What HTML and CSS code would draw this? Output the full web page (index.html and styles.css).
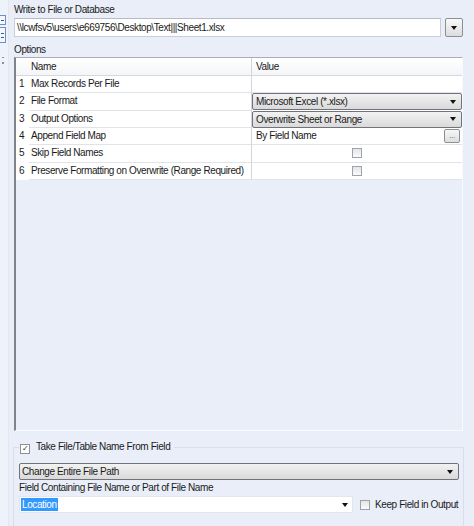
FILE: index.html
```html
<!DOCTYPE html>
<html lang="en">
<head>
  <meta charset="utf-8">
  <title>Output Data</title>
  <link rel="stylesheet" href="styles.css">
</head>
<body>
<div class="frame">
  <div class="strip">
    <div class="tab tab-one"><span class="dash"></span></div>
    <div class="tab tab-two"><span class="dash"></span><span class="dash"></span></div>
    <div class="dot dot-one"></div>
    <div class="dot dot-two"></div>
  </div>

  <div class="main">
    <div class="label first">Write to File or Database</div>
    <div class="path-row">
      <div class="path-box">\\lcwfsv5\users\e669756\Desktop\Text|||Sheet1.xlsx</div>
      <div class="drop-btn"><span class="arrow"></span></div>
    </div>

    <div class="label options">Options</div>
    <div class="grid">
      <div class="grow head">
        <div class="num"></div>
        <div class="name">Name</div>
        <div class="value">Value</div>
      </div>
      <div class="grow">
        <div class="num">1</div>
        <div class="name">Max Records Per File</div>
        <div class="value"></div>
      </div>
      <div class="grow">
        <div class="num">2</div>
        <div class="name">File Format</div>
        <div class="value"><div class="combo">Microsoft Excel (*.xlsx)<span class="arrow"></span></div></div>
      </div>
      <div class="grow">
        <div class="num">3</div>
        <div class="name">Output Options</div>
        <div class="value"><div class="combo">Overwrite Sheet or Range<span class="arrow"></span></div></div>
      </div>
      <div class="grow">
        <div class="num">4</div>
        <div class="name">Append Field Map</div>
        <div class="value text">By Field Name<span class="dots-btn">...</span></div>
      </div>
      <div class="grow">
        <div class="num">5</div>
        <div class="name">Skip Field Names</div>
        <div class="value center"><span class="check"></span></div>
      </div>
      <div class="grow">
        <div class="num">6</div>
        <div class="name">Preserve Formatting on Overwrite (Range Required)</div>
        <div class="value center"><span class="check"></span></div>
      </div>
    </div>

    <fieldset class="group">
      <legend><span class="check ticked">&#10003;</span>Take File/Table Name From Field</legend>
      <div class="combo wide">Change Entire File Path<span class="arrow"></span></div>
      <div class="label field">Field Containing File Name or Part of File Name</div>
      <div class="field-row">
        <div class="field-box"><span class="selected">Location</span><span class="arrow"></span></div>
        <span class="check"></span>
        <span class="keep">Keep Field in Output</span>
      </div>
    </fieldset>
  </div>
</div>
</body>
</html>
```

FILE: styles.css
```css
html, body { margin: 0; padding: 0; }
body { background: #e9eef8; font-family: "Liberation Sans", Arial, sans-serif; font-size: 10px; letter-spacing: -0.4px; color: #1a1a1a; width: 474px; height: 526px; overflow: hidden; }

.frame { display: flex; height: 526px; }

/* left strip with cut off buttons */
.strip { width: 9px; background: #eef2fa; border-right: 1px solid #e2e7f1; padding-top: 15px; box-sizing: border-box; }
.tab { width: 6px; border: 1px solid #6d8fc8; border-left: none; background: #f4f7fd; box-sizing: border-box; display: flex; flex-direction: column; justify-content: center; gap: 3px; }
.tab-one { height: 10px; }
.tab-two { height: 16px; margin-top: 2px; }
.dash { display: block; width: 3px; height: 1px; background: #3b5b95; margin-left: 1px; }
.dot { width: 2px; height: 1px; background: #8a8f99; margin-left: 2px; }
.dot-one { margin-top: 14px; }
.dot-two { margin-top: 4px; height: 2px; }

.main { flex: 1; padding: 0 11px 0 5px; }

.label { line-height: 14px; }
.label.first { padding-top: 3px; height: 15px; }
.label.options { padding-top: 6px; height: 14px; }

.path-row { display: flex; gap: 4px; height: 19px; }
.path-box { flex: 1; background: #fff; border: 1px solid #c9ced8; border-top-color: #b5bac4; line-height: 17px; padding-left: 2px; }
.drop-btn { width: 16px; height: 17px; border: 1px solid #8b8f96; border-radius: 2px; background: linear-gradient(#fafafa, #dcdcdc); display: flex; align-items: center; justify-content: center; }

.arrow { display: inline-block; width: 0; height: 0; border-left: 3.5px solid transparent; border-right: 3.5px solid transparent; border-top: 4px solid #111; }

/* options grid */
.grid { height: 374px; border-left: 2px solid #7f838b; border-top: 1px solid #a9adb5; border-right: 1px solid #f7f9fd; border-bottom: 1px solid #f7f9fd; box-sizing: border-box; }
.grow { display: flex; height: 17.33px; background: #fff; line-height: 16px; }
.grow.head { height: 18px; line-height: 17px; background: linear-gradient(#ffffff, #f4f5f8); }
.grow.head .name, .grow.head .value, .grow.head .num { border-bottom: 1px solid #d5d8de; }
.num { width: 13px; padding-left: 3px; box-sizing: border-box; }
.name { width: 223px; padding-left: 2px; box-sizing: border-box; border-bottom: 1px solid #e1e3e8; border-right: 1px solid #d2d5db; white-space: nowrap; overflow: hidden; }
.value { flex: 1; border-bottom: 1px solid #e1e3e8; padding-left: 4px; }
.value.text { display: flex; align-items: center; justify-content: space-between; padding-right: 2px; }
.value.center { display: flex; align-items: center; padding-left: 100px; }
.grow .value:has(.combo) { padding-left: 0; border-bottom: none; }

.combo { height: 17px; box-sizing: border-box; border: 1px solid #70737a; border-radius: 2px; background: linear-gradient(#f2f2f2, #dadada); padding: 0 5px 0 3px; display: flex; align-items: center; justify-content: space-between; line-height: 15px; }

.dots-btn { width: 16px; height: 14px; box-sizing: border-box; border: 1px solid #8c9096; border-radius: 2px; background: linear-gradient(#f7f7f7, #dedede); font-size: 8px; line-height: 12px; text-align: center; color: #555; }

.check { display: inline-block; width: 10px; height: 10px; box-sizing: border-box; border: 1px solid #9da1a8; background: linear-gradient(#e4e5e8, #fbfbfc); }
.check.ticked { background: #fff; border-color: #8e9298; font-size: 8px; line-height: 8px; text-align: center; color: #333; margin-right: 6px; vertical-align: -1px; }

/* bottom group */
.group { margin: 9px -1px 0 -1px; padding: 9px 4px 0 5px; border: 1px solid #d9dee8; border-bottom: none; height: 90px; }
.group legend { padding: 0 4px 0 1px; margin-left: 0; line-height: 14px; }
.combo.wide { padding-left: 2px; padding-right: 5px; }
.label.field { padding-top: 1px; height: 15px; line-height: 14px; }
.field-row { display: flex; align-items: center; height: 17px; }
.field-box { width: 334px; height: 17px; box-sizing: border-box; background: #fff; border: 1px solid #e3e6ec; display: flex; align-items: center; justify-content: space-between; padding: 0 4px 0 1px; }
.selected { background: #3399ff; color: #fff; line-height: 13px; padding: 0 1px; }
.field-row .check { margin-left: 7px; }
.keep { margin-left: 5px; }
```
